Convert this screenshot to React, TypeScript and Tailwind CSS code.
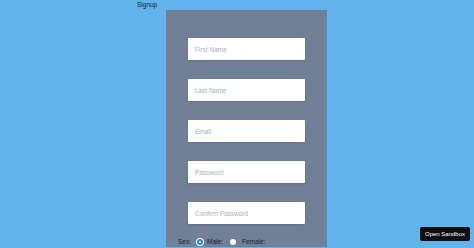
export default function App() {
  const fields = ["First Name", "Last Name", "Email", "Password", "Confirm Password"]

  return (
    <div className="relative h-[248px] w-[474px] overflow-hidden bg-[#63b3ed] font-['Liberation_Sans',Arial,sans-serif]">
      <div className="flex items-start pl-[137px]">
        <h1 className="w-[29px] shrink-0 text-[6.5px] leading-[9px] text-[#1a202c]">Signup</h1>
        <div className="mt-[10px] w-[161px] bg-[#718096] px-[22px] pt-[28px]">
          <div className="flex flex-col gap-[19px]">
            {fields.map((f) => (
              <input
                key={f}
                placeholder={f}
                className="h-[22px] w-[117px] rounded-[1px] bg-white px-[7px] text-[6.5px] text-[#4a5568] shadow-sm outline-none placeholder:text-[#a9b0bb]"
              />
            ))}
          </div>
          <div className="-ml-[10px] mt-[13px] flex items-center text-[6.5px] text-[#1a202c]">
            <span>Sex:</span>
            <span className="ml-[6px] flex h-[6px] w-[6px] items-center justify-center rounded-full bg-[#3182ce] ring-1 ring-white">
              <span className="h-[2px] w-[2px] rounded-full bg-white" />
            </span>
            <span className="ml-[4px]">Male:</span>
            <span className="ml-[7px] h-[6px] w-[6px] rounded-full bg-white" />
            <span className="ml-[6px]">Female:</span>
          </div>
        </div>
      </div>
      <button className="absolute bottom-[7px] right-[4px] rounded-[2px] bg-[#0f0f10] px-[5px] py-[3px] text-[6px] leading-[8px] text-white">
        Open Sandbox
      </button>
    </div>
  )
}
